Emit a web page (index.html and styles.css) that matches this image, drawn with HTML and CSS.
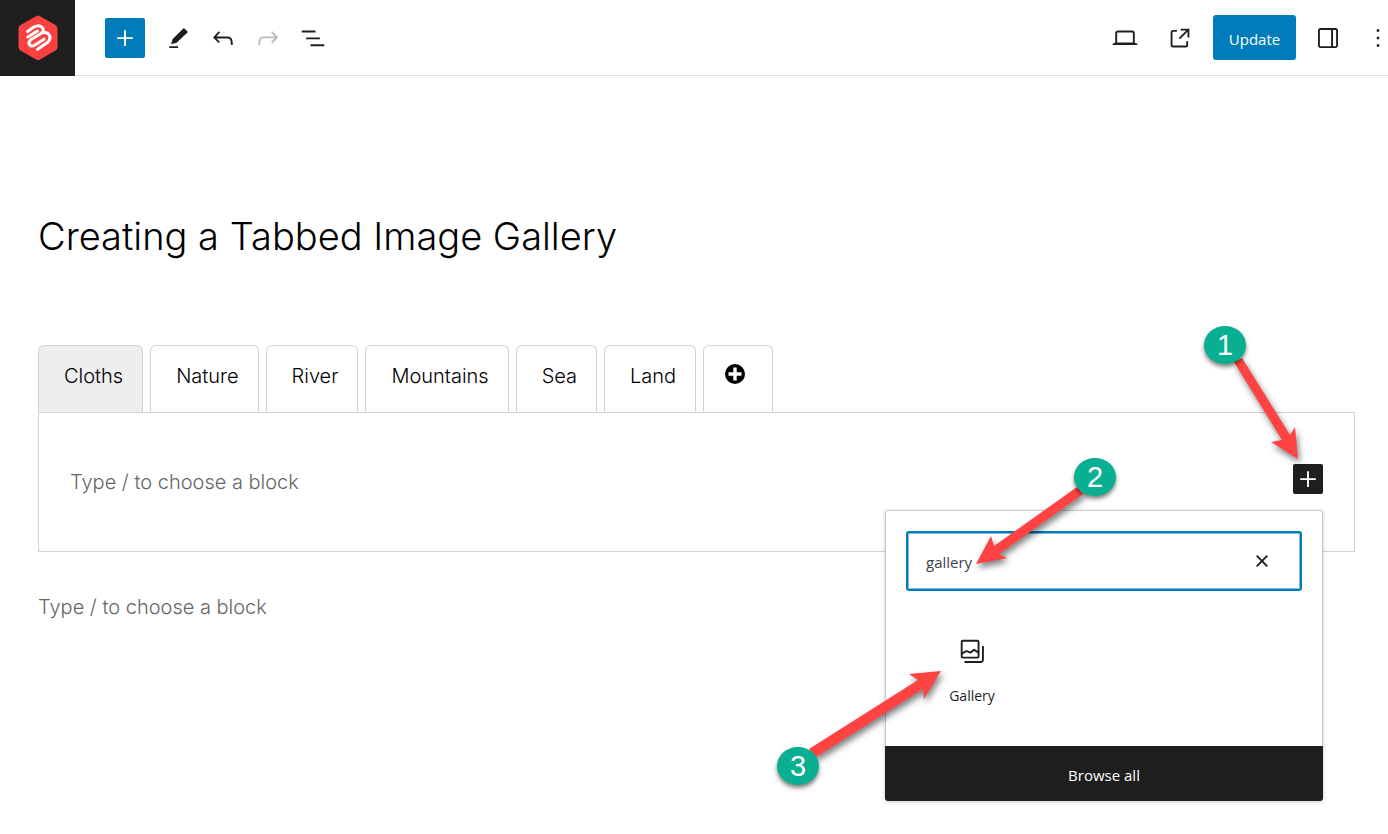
FILE: index.html
```html
<!DOCTYPE html>
<html lang="en">
<head>
  <meta charset="UTF-8">
  <meta name="viewport" content="width=device-width, initial-scale=1.0">
  <title>Creating a Tabbed Image Gallery</title>
  <link rel="stylesheet" href="styles.css">
</head>
<body>
  <!-- Top toolbar -->
  <header class="header">
    <a class="site-logo" href="#" aria-label="View posts">
      <svg width="40" height="46" viewBox="0 0 40 46">
        <path d="M18 1.2Q20 0 22 1.2L37.500 10Q39.500 11.200 39.500 13.500V32Q39.500 34.300 37.500 35.500L22 44.500Q20 45.600 18 44.500L2.500 35.500Q.5 34.300 .5 32V13.500Q.5 11.200 2.500 10Z" fill="#fa4142"/>
        <g fill="none" stroke="#fff" stroke-width="3" stroke-linecap="round" stroke-linejoin="round">
          <path d="M9.500 16.500L16 12C22 8.500 28 13.500 24 17.800L12.500 25C9 28.500 12.500 32.500 16.500 30.300L26 24.200"/>
          <path d="M9.800 22L19.500 16M24 17.800C31 16 34.500 22.500 29.500 27.500L19.500 34.300"/>
        </g>
      </svg>
    </a>
    <div class="tools">
      <button class="btn btn-add" aria-label="Toggle block inserter">
        <svg width="30" height="30" viewBox="0 0 24 24"><path d="M11.250 5.800h1.500v5.500h5.500v1.500h-5.500v5.500h-1.500v-5.500h-5.500v-1.500h5.500z"/></svg>
      </button>
      <button class="btn" aria-label="Tools">
        <svg width="30" height="30" viewBox="0 0 24 24"><path d="m20 7.200-3.300-3.200-9 8.700-1.200 4.300 4.400-1.200L20 7.200Zm-8 11.400H5V20h7v-1.400Z"/></svg>
      </button>
      <button class="btn" aria-label="Undo">
        <svg width="30" height="30" viewBox="0 0 24 24"><path d="M18.300 11.700c-.6-.6-1.400-.9-2.300-.9H6.700l2.900-3.300-1.100-1-4.500 5L8.500 16l1-1-2.700-2.700H16c.5 0 .9.200 1.300.5 1 1 1 3.400 1 4.500v.3h1.500v-.2c0-1.500 0-4.300-1.500-5.700z"/></svg>
      </button>
      <button class="btn" aria-label="Redo" disabled>
        <svg width="30" height="30" viewBox="0 0 24 24"><path d="M15.600 6.500l-1.100 1 2.900 3.300H8c-.9 0-1.700.3-2.300.9-1.400 1.500-1.400 4.200-1.400 5.600v.2h1.500v-.3c0-1.100 0-3.500 1-4.500.3-.3.7-.5 1.300-.5h9.200L14.500 15l1.100 1.100 4.600-4.600-4.600-5z"/></svg>
      </button>
      <button class="btn" aria-label="Document overview">
        <svg width="30" height="30" viewBox="0 0 24 24"><path d="M3 6h11v1.500H3V6Zm3.500 5.500h11V13h-11v-1.500ZM21 17H10v1.500h11V17Z"/></svg>
      </button>
    </div>
    <div class="settings">
      <button class="btn" aria-label="View">
        <svg width="30" height="30" viewBox="0 0 24 24"><path d="M20.500 16h-.7V8c0-1.100-.9-2-2-2H6.200c-1.100 0-2 .9-2 2v8h-.7c-.8 0-1.500.7-1.500 1.500h20c0-.8-.7-1.500-1.500-1.500zM5.700 8c0-.3.2-.5.500-.5h11.600c.3 0 .5.200.5.500v7.600H5.700V8z"/></svg>
      </button>
      <a class="btn btn-view" href="#" aria-label="View post">
        <svg width="30" height="30" viewBox="0 0 24 24"><path d="M19.500 4.500h-7V6h4.440l-5.970 5.970 1.060 1.060L18 7.060v4.440h1.500v-7Zm-13 1a2 2 0 0 0-2 2v10a2 2 0 0 0 2 2h10a2 2 0 0 0 2-2v-3H17v3a.5.5 0 0 1-.5.500h-10a.5.5 0 0 1-.5-.5v-10a.5.5 0 0 1 .5-.5h3V5.500h-3Z"/></svg>
      </a>
      <button class="btn-update">Update</button>
      <button class="btn btn-sidebar" aria-label="Settings">
        <svg width="30" height="30" viewBox="0 0 24 24"><path fill-rule="evenodd" d="M18 4H6c-1.100 0-2 .9-2 2v12c0 1.100.9 2 2 2h12c1.100 0 2-.9 2-2V6c0-1.100-.9-2-2-2zM14.500 18.500H6c-.3 0-.5-.2-.5-.5V6c0-.3.2-.5.500-.5h8.500v13zm4-.5c0 .3-.2.500-.5.500h-2v-13h2c.3 0 .5.200.5.500v12z"/></svg>
      </button>
      <button class="btn-more" aria-label="Options">
        <svg width="10" height="30" viewBox="8 0 8 24"><path d="M13 19h-2v-2h2v2zm0-6h-2v-2h2v2zm0-6h-2V5h2v2z"/></svg>
      </button>
    </div>
  </header>

  <main class="editor">
    <h1 class="post-title">Creating a Tabbed Image Gallery</h1>

    <!-- Tabs block -->
    <section class="tabs-block">
      <div class="tabs" role="tablist">
        <button class="tab active" role="tab" aria-selected="true">Cloths</button>
        <button class="tab" role="tab">Nature</button>
        <button class="tab" role="tab">River</button>
        <button class="tab" role="tab">Mountains</button>
        <button class="tab" role="tab">Sea</button>
        <button class="tab" role="tab">Land</button>
        <button class="tab tab-add" aria-label="Add tab">
          <svg width="20" height="20" viewBox="0 0 20 20"><circle cx="10" cy="10" r="10"/><path d="M10 3.500v13M3.500 10h13" stroke="#fff" stroke-width="3.400"/></svg>
        </button>
      </div>
      <div class="tab-panel" role="tabpanel">
        <p class="placeholder">Type / to choose a block</p>
        <div class="inserter">
          <button class="inserter-toggle" aria-label="Add block">
            <svg width="30" height="30" viewBox="0 0 24 24"><path d="M11.250 5.800h1.500v5.500h5.500v1.500h-5.500v5.500h-1.500v-5.500h-5.500v-1.500h5.500z"/></svg>
          </button>
          <div class="popover">
            <div class="search">
              <input class="search-input" type="text" value="gallery" aria-label="Search for blocks">
              <button class="search-clear" aria-label="Reset search">
                <svg width="12" height="12" viewBox="0 0 12 12"><path d="M.7 .7L11.300 11.300M11.300 .7L.7 11.300" stroke="#1e1e1e" stroke-width="1.900"/></svg>
              </button>
            </div>
            <div class="results">
              <button class="block-item">
                <svg width="30" height="30" viewBox="0 0 24 24"><path fill-rule="evenodd" d="M16.375 4.500H4.625a.125.125 0 0 0-.125.125v8.254l2.859-1.540a.75.75 0 0 1 .68-.016l2.384 1.142 2.890-2.074a.75.75 0 0 1 .874 0l2.313 1.660V4.625a.125.125 0 0 0-.125-.125Zm.125 9.398-2.750-1.975-2.813 2.020a.75.75 0 0 1-.76.067l-2.444-1.170L4.500 14.583v1.792c0 .069.056.125.125.125h11.750a.125.125 0 0 0 .125-.125v-2.477ZM4.625 3C3.728 3 3 3.728 3 4.625v11.750C3 17.273 3.728 18 4.625 18h11.750c.898 0 1.625-.727 1.625-1.625V4.625C18 3.728 17.273 3 16.375 3H4.625ZM20 8v11c0 .69-.31 1-.999 1H6v1.500h13.001c1.520 0 2.499-.982 2.499-2.500V8H20Z"/></svg>
                <span>Gallery</span>
              </button>
            </div>
            <button class="browse-all">Browse all</button>
          </div>
        </div>
      </div>
    </section>

    <p class="placeholder">Type / to choose a block</p>

    <!-- Numbered step markers -->
    <svg class="steps" width="620" height="534" viewBox="768 300 620 534">
      <g class="step">
        <path d="M1234 362L1242 358L1290 435L1295 427L1298 459L1271 442L1282 440Z"/>
        <ellipse cx="1225" cy="345" rx="21" ry="19"/>
        <text x="1225" y="355">1</text>
      </g>
      <g class="step">
        <path d="M1077 487L1083 494L999 554L1007 558L976 564L991 536L994 546Z"/>
        <ellipse cx="1095" cy="477" rx="21" ry="19"/>
        <text x="1095" y="487">2</text>
      </g>
      <g class="step">
        <path d="M809 749L816 757L923 689L924 699L941 671L909 674L918 680Z"/>
        <ellipse cx="798" cy="766" rx="21" ry="19"/>
        <text x="798" y="776">3</text>
      </g>
    </svg>
  </main>
</body>
</html>
```
FILE: styles.css
```css
* {
  box-sizing: border-box;
}
body {
  display: flex;
  flex-direction: column;
  min-height: 100vh;
  margin: 0;
  background: #fff;
  color: #1e1e1e;
  font-family: "Open Sans", "Noto Sans", sans-serif;
  font-size: 15px;
}
button {
  font: inherit;
  color: inherit;
  border: 0;
  padding: 0;
  background: none;
  cursor: pointer;
}
svg {
  display: block;
  flex-shrink: 0;
  fill: currentColor;
}

/* toolbar */
.header {
  display: flex;
  align-items: center;
  height: 76px;
  border-bottom: 1px solid #e0e0e0;
}
.site-logo {
  display: flex;
  align-items: center;
  justify-content: center;
  width: 75px;
  height: 76px;
  margin-bottom: -1px;
  background: #1e1e1e;
}
.tools {
  display: flex;
  gap: 5px;
  margin-left: 30px;
}
.settings {
  display: flex;
  align-items: center;
  margin-left: auto;
  padding-right: 5px;
}
.btn {
  display: flex;
  align-items: center;
  justify-content: center;
  width: 40px;
  height: 40px;
  color: #1e1e1e;
}
.btn:disabled {
  color: #bbb;
}
.btn-add {
  margin-right: 8px;
  border-radius: 2px;
  background: #007cba;
  color: #fff;
}
.btn-view {
  margin: 0 13px 0 15px;
}
.btn-update {
  width: 83px;
  height: 45px;
  padding-top: 3px;
  border-radius: 3px;
  background: #007cba;
  color: #fff;
}
.btn-sidebar {
  margin: 0 25px 0 12px;
}

/* content */
.editor {
  position: relative;
  flex: 1;
  padding: 135px 33px 0 38px;
  font-family: Inter, sans-serif;
  font-weight: 300;
}
.post-title {
  margin: 0;
  color: #000;
  font-size: 38px;
  font-weight: 300;
  line-height: 50px;
}
.placeholder {
  margin: 0;
  color: #666;
  font-size: 20px;
  line-height: 30px;
}
.tabs-block {
  margin: 84px 0 40px;
}
.tabs {
  display: flex;
  gap: 7px;
}
.tab {
  height: 67px;
  padding: 0 19px 6px 25px;
  border: 1px solid #d3d3d3;
  border-bottom: 0;
  border-radius: 6px 6px 0 0;
  color: #000;
  font-size: 20px;
}
.tab.active {
  background: #eee;
}
.tab-add {
  width: 70px;
  padding: 0 0 11px 21px;
}
.tab-panel {
  display: flex;
  justify-content: space-between;
  height: 140px;
  padding: 54px 31px;
  border: 1px solid #d3d3d3;
}
.inserter {
  position: relative;
  margin-top: -3px;
}
.inserter-toggle {
  display: block;
  border-radius: 2px;
  background: #1e1e1e;
  color: #fff;
}

/* block picker */
.popover {
  position: absolute;
  top: 46px;
  right: 0;
  width: 438px;
  border: 1px solid #ccc;
  border-bottom: 0;
  border-radius: 3px;
  background: #fff;
  box-shadow: 0 1px 4px rgba(0, 0, 0, 0.2);
  font-family: "Open Sans", "Noto Sans", sans-serif;
  font-weight: 400;
}
.search {
  display: flex;
  align-items: center;
  height: 60px;
  margin: 20px;
  padding: 0 32px 0 18px;
  border: 2px solid #007cba;
  border-radius: 3px;
  box-shadow: inset 0 0 0 1px #80bddc;
}
.search-input {
  flex: 1;
  min-width: 0;
  padding: 2px 0 0;
  border: 0;
  outline: 0;
  background: none;
  color: #3c434a;
  font: inherit;
}
.results {
  display: grid;
  grid-template-columns: repeat(3, 1fr);
  height: 135px;
  padding: 0 20px;
}
.block-item {
  display: flex;
  flex-direction: column;
  align-items: center;
  gap: 20px;
  padding-top: 25px;
  font-size: 14px;
}
.browse-all {
  display: block;
  width: calc(100% + 2px);
  height: 55px;
  margin: 0 -1px;
  padding-top: 2px;
  border-radius: 0 0 3px 3px;
  background: #1e1e1e;
  color: #fff;
}

/* step markers, anchored to the right like the picker */
.steps {
  position: absolute;
  top: 224px;
  right: 0;
  pointer-events: none;
}
.step path {
  fill: #ff4343;
  filter: drop-shadow(2px 4px 3px rgba(0, 0, 0, 0.5));
}
.step ellipse {
  fill: #08af91;
  filter: drop-shadow(0 3px 2px rgba(0, 0, 0, 0.5));
}
.step text {
  fill: #fff;
  font-family: "Liberation Sans", Arial, sans-serif;
  font-size: 29px;
  font-weight: 400;
  text-anchor: middle;
}
```
